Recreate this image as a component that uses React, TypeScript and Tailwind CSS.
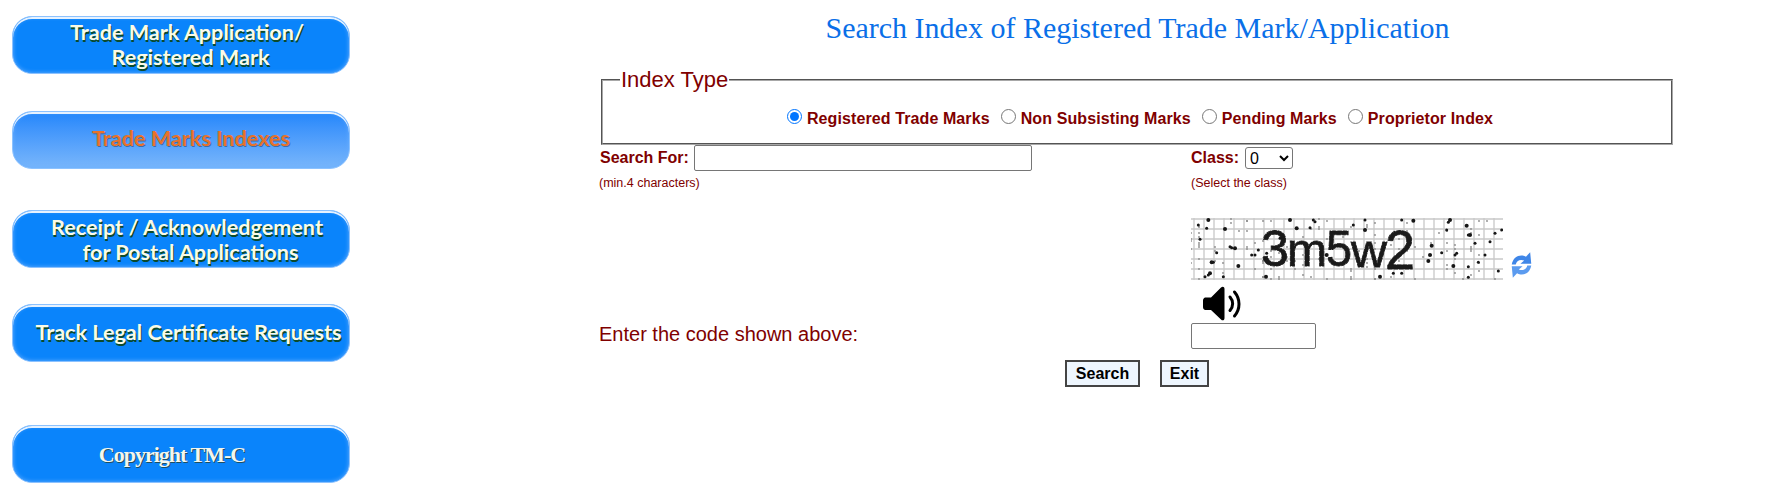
const menu = [
  { lines: ["Trade Mark Application/", "Registered Mark"], pad: "pl-[12px] pb-px" },
  { lines: ["Trade Marks Indexes"], pad: "pl-[20px] pb-[3px]", active: true },
  { lines: ["Receipt / Acknowledgement", "for Postal Applications"], pad: "pl-[12px] pt-px" },
  { lines: ["Track Legal Certificate Requests"], pad: "pl-[15px] pb-px" },
];

const radios = [
  { label: "Registered Trade Marks", checked: true },
  { label: "Non Subsisting Marks" },
  { label: "Pending Marks" },
  { label: "Proprietor Index" },
];

// dots of the captcha, read off the reference
const bigDots = [
  [85, 45], [55, 60], [80, 70], [135, 72], [60, 103], [150, 125], [165, 130], [110, 143], [100, 172],
  [175, 183], [85, 210], [130, 215], [258, 215], [225, 150], [215, 150], [350, 70], [405, 50], [390, 68],
  [330, 45], [555, 45], [665, 45], [700, 47], [805, 52], [800, 75], [860, 62], [945, 85], [965, 75],
  [870, 90], [885, 115], [930, 110], [755, 122], [785, 143], [830, 145], [750, 150], [915, 150], [895, 172],
  [820, 183], [865, 185], [955, 198], [745, 168], [640, 205], [665, 205], [600, 215], [865, 217], [75, 215],
  [555, 75], [520, 60], [300, 100], [440, 150], [260, 145], [155, 128], [95, 172], [235, 135], [825, 150],
  [810, 45], [400, 45], [865, 90], [90, 205],
];

function smallDots() {
  const out: number[][] = [];
  let seed = 41;
  for (let i = 0; i < 130; i++) {
    seed = (seed * 1103 + 12345) % 65536;
    const x = seed % 312;
    seed = (seed * 1103 + 12345) % 65536;
    const y = seed % 62;
    out.push([x, y]);
  }
  return out;
}

function Captcha() {
  const vertical = Array.from({ length: 32 }, (_, i) => i * 10 + 3);
  const horizontal = Array.from({ length: 7 }, (_, i) => i * 10 + 1);
  return (
    <svg width="312" height="62" viewBox="0 0 312 62" className="block blur-[0.35px]">
      <rect width="312" height="62" fill="#fff" />
      {vertical.map((x) => (
        <line key={x} x1={x} x2={x} y1="0" y2="62" stroke="#c8c8c8" strokeWidth="1.3" />
      ))}
      {horizontal.map((y) => (
        <line key={y} x1="0" x2="312" y1={y} y2={y} stroke="#c8c8c8" strokeWidth="1.3" />
      ))}
      {smallDots().map(([x, y], i) => (
        <circle key={i} cx={x} cy={y} r="0.9" fill="#8a8a8a" />
      ))}
      {bigDots.map(([x, y], i) => (
        <circle key={i} cx={x / 3 - 11} cy={y / 3 - 13} r={i % 3 === 0 ? 2 : 1.5} fill="#161616" />
      ))}
      <g fontFamily="'Liberation Sans', sans-serif" fill="#1a1a1a" stroke="#1a1a1a" strokeWidth="0.8" strokeDasharray="5 0.8">
        <text x="70" y="48" fontSize="50">3</text>
        <text x="96" y="48" fontSize="46" textLength="40" lengthAdjust="spacingAndGlyphs">m</text>
        <text x="135" y="48" fontSize="50" textLength="26" lengthAdjust="spacingAndGlyphs">5</text>
        <text x="160" y="49" fontSize="46" textLength="36" lengthAdjust="spacingAndGlyphs">w</text>
        <text x="194" y="51" fontSize="56" textLength="30" lengthAdjust="spacingAndGlyphs">2</text>
      </g>
    </svg>
  );
}

function Speaker() {
  return (
    <svg width="38" height="35" viewBox="0 0 38 35" className="block">
      <path
        d="M2 11.5 C0.8 12 0 13 0 14.5 V21 C0 22.5 0.8 23.5 2 24 H8 L18 33.5 C19.5 35 21.5 34.5 21.5 32 V3 C21.5 0.5 19.5 0 18 1.5 L8 11.5 Z"
        fill="#000"
      />
      <path d="M27 11 C30.5 15 30.5 20.5 27 24.5" fill="none" stroke="#000" strokeWidth="3" strokeLinecap="round" />
      <path d="M31.5 6 C37.5 13 37.5 23 31.5 30" fill="none" stroke="#000" strokeWidth="3" strokeLinecap="round" />
    </svg>
  );
}

function Refresh() {
  const half = "M0.5 11.5 C1.5 5.5 6 2.6 10.5 3.2 C11.8 3.4 12.8 3.8 13.6 4.3 L17.5 0.3 L18.5 10.8 L8.5 10.8 L12 7.8 C8 6.4 4.8 8 4.2 11.5 Z";
  return (
    <svg width="21" height="26" viewBox="0 0 19 24" className="mb-[2px] ml-[8px] block">
      <path d={half} fill="#3f86e8" />
      <path d={half} fill="#5b9bef" transform="rotate(180 9.5 12)" />
    </svg>
  );
}

function MenuButton({ lines, pad, active }: { lines: string[]; pad: string; active?: boolean }) {
  return (
    <a
      className={`flex h-[58px] w-[338px] flex-col items-center justify-center rounded-[20px] border border-[#8cc2ff] font-['Lato','Noto_Sans',sans-serif] text-[21.6px] leading-[25px] font-bold shadow-[inset_0_2px_0_#e6f2ff,inset_0_0_4px_#69aeff] ${pad} ${
        active
          ? "bg-gradient-to-b from-[#2086fb] to-[#78b6fb] text-[#e8722a] [text-shadow:1px_1px_0_#3c6ea8]"
          : "bg-[#0a84fb] text-[#fbfbe6] [text-shadow:1px_2px_0_#0c4a2a]"
      }`}
    >
      {lines.map((line, i) => (
        <span key={line} className={`whitespace-nowrap ${i === 1 ? "pl-[7px]" : ""}`}>
          {line}
        </span>
      ))}
    </a>
  );
}

export default function App() {
  return (
    <div className="flex h-[501px] w-[1766px] overflow-hidden bg-white font-['Liberation_Sans',Arial,sans-serif] text-[#800000]">
      {/* Left menu */}
      <aside className="w-[600px] shrink-0 pl-3 pt-4">
        <MenuButton {...menu[0]} />
        <div className="mt-[37px]">
          <MenuButton {...menu[1]} />
        </div>
        <div className="mt-[41px]">
          <MenuButton {...menu[2]} />
        </div>
        <div className="mt-[36px]">
          <MenuButton {...menu[3]} />
        </div>
        <a className="mt-[63px] flex h-[58px] w-[338px] items-center justify-center rounded-[20px] border border-[#8cc2ff] bg-[#0a84fb] pr-[18px] font-['Liberation_Serif',serif] text-[22px] font-bold tracking-[-1px] text-[#f4f6ee] shadow-[inset_0_2px_0_#e6f2ff,inset_0_0_4px_#69aeff] [text-shadow:1px_1px_0_#1f4f5f]">
          Copyright TM-C
        </a>
      </aside>

      {/* Search form */}
      <main className="w-[1074px]">
        <h1 className="ml-px pt-[10px] text-center font-['Liberation_Serif',serif] text-[30px] leading-[36px] font-normal text-[#0a6fe8]">
          Search Index of Registered Trade Mark/Application
        </h1>

        <fieldset className="mt-[21px] ml-px h-[78px] w-[1072px] border-2 border-[#a8a8a8] [border-style:groove]">
          <legend className="ml-[17px] px-px text-[22px] leading-[25px]">Index Type</legend>
          <div className="flex items-center justify-center gap-[11px] pl-[6px] pt-[17px]">
            {radios.map((radio) => (
              <label key={radio.label} className="flex items-center gap-[5px] text-[16px] leading-[20px] font-bold tracking-[0.1px]">
                <input type="radio" name="index" defaultChecked={radio.checked} className="m-0 -mt-[6px] h-[15px] w-[15px]" />
                {radio.label}
              </label>
            ))}
          </div>
        </fieldset>

        <div className="flex items-center">
          <div className="flex w-[591px] items-center gap-[5px]">
            <label className="text-[16px] font-bold">Search For:</label>
            <input className="h-[26px] w-[338px] rounded-[2px] border border-[#767676] bg-white" />
          </div>
          <div className="flex items-center gap-[6px]">
            <label className="text-[16px] font-bold">Class:</label>
            <select defaultValue="0" className="h-[22px] w-[48px] rounded-[3px] border border-[#767676] bg-white text-[16px] text-black">
              <option value="0">0</option>
            </select>
          </div>
        </div>

        <div className="mt-[4px] -ml-px flex text-[12.5px] leading-[16px]">
          <div className="w-[592px]">(min.4 characters)</div>
          <div>(Select the class)</div>
        </div>

        <div className="mt-[27px] ml-[591px] flex items-end">
          <Captcha />
          <Refresh />
        </div>

        <div className="mt-[6px] ml-[603px]">
          <Speaker />
        </div>

        <div className="-mt-[2px] flex items-center">
          <div className="-ml-px w-[592px] pb-[4px] text-[20px]">Enter the code shown above:</div>
          <input className="h-[26px] w-[125px] rounded-[2px] border border-[#767676] bg-white" />
        </div>

        <div className="mt-[7px] ml-[465px] flex gap-5">
          <button className="h-[27px] w-[75px] border-2 border-[#444] bg-[#eef6fe] pb-px text-[16px] font-bold text-black">Search</button>
          <button className="h-[27px] w-[49px] border-2 border-[#444] bg-[#eef6fe] pb-px text-[16px] font-bold text-black">Exit</button>
        </div>
      </main>
    </div>
  );
}
